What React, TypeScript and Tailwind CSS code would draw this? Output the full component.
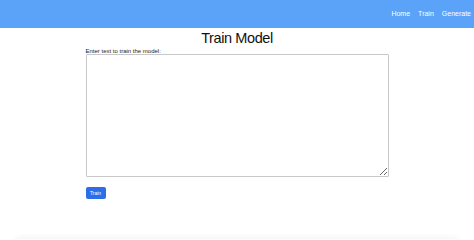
export default function App() {
  return (
    <div className="min-h-screen bg-white font-['Liberation_Sans',Arial,sans-serif]">
      {/* Header */}
      <header className="h-[28px] bg-[#5ba2f9] flex items-center justify-end pr-[3px]">
        <nav className="flex items-center gap-[8px] text-[7px] text-white">
          <a href="#">Home</a>
          <a href="#">Train</a>
          <a href="#">Generate</a>
        </nav>
      </header>

      {/* Main Content */}
      <main className="w-[303px] mx-auto">
        <h1 className="text-center text-[14.5px] leading-[18px] pt-[1px] text-[#111] tracking-[-0.4px]">
          Train Model
        </h1>
        <label className="block text-[6px] leading-[6px] mt-[1px] text-[#222]">
          Enter text to train the model:
        </label>
        <textarea className="block w-[303px] h-[123px] border border-[#c8c8c8] rounded-[1px] resize-y" />
        <button className="mt-[10px] h-[12px] w-[20px] rounded-[2px] bg-[#2d6ee8] text-white text-[5px] leading-[12px]">
          Train
        </button>
      </main>

      <div className="mt-[37px] mx-[15px] h-[4px] rounded-t-lg shadow-[0_-2px_5px_rgba(0,0,0,0.05)]" />
    </div>
  );
}
